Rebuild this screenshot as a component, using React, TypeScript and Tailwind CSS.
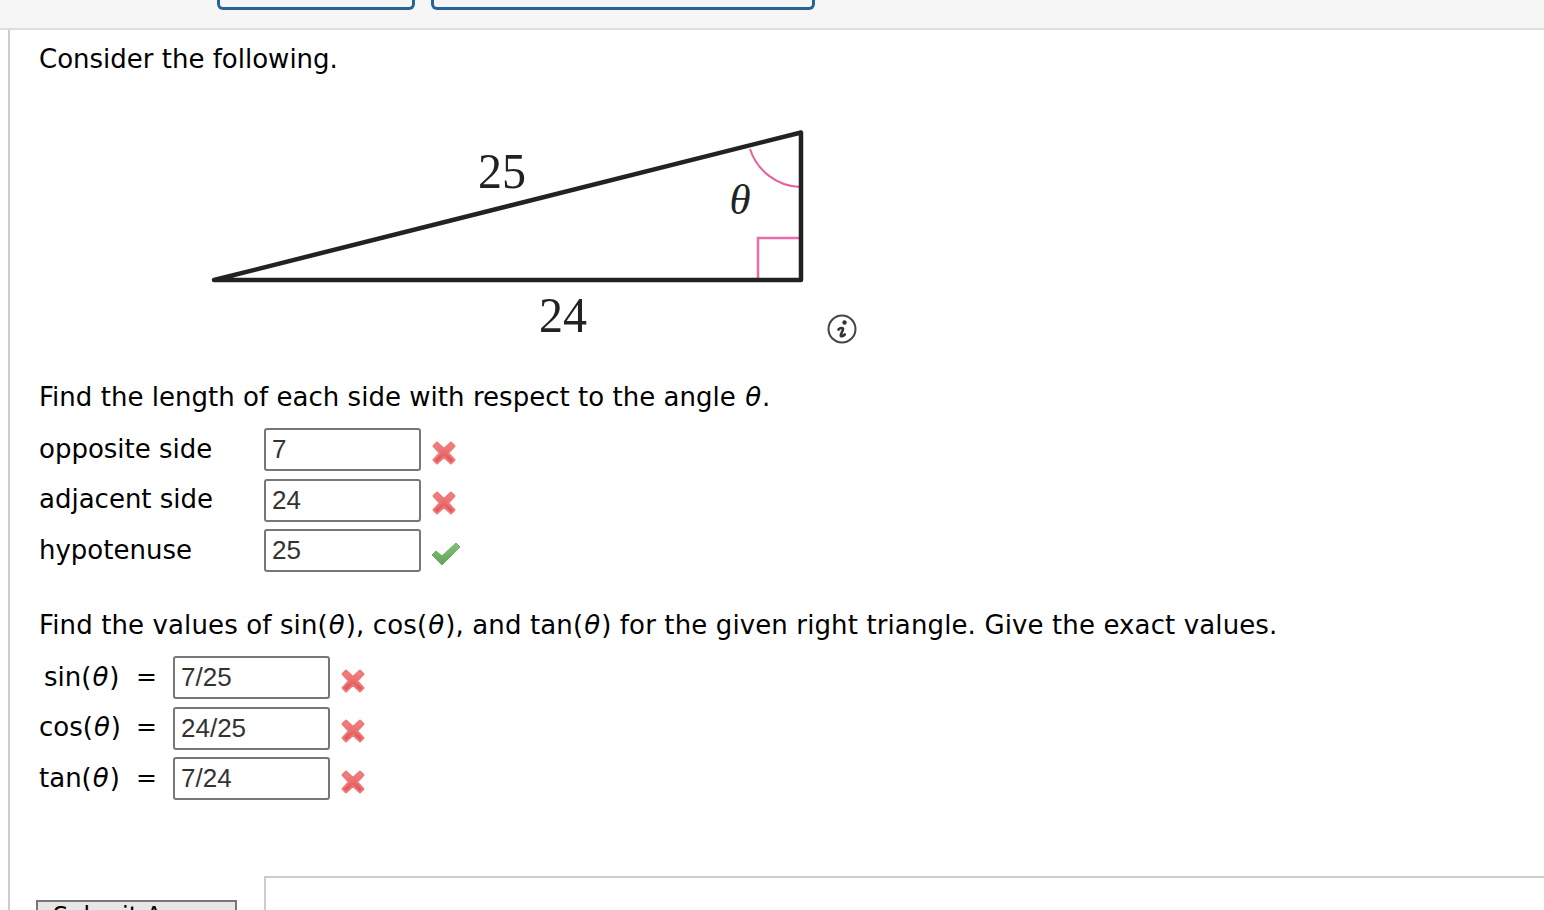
function Theta() {
  return <span className="mx-[1px] italic">θ</span>;
}

function Cross() {
  return (
    <svg width="28" height="28" viewBox="0 0 28 28" className="shrink-0">
      <defs>
        <linearGradient id="crossFill" x1="0" y1="0" x2="0" y2="1">
          <stop offset="0" stopColor="#f28a8a" />
          <stop offset="1" stopColor="#e04c4c" />
        </linearGradient>
      </defs>
      <path d="M3.5 7 7 3.5 14 10 21 3.5 24.5 7 18 14 24.5 21 21 24.5 14 18 7 24.5 3.5 21 10 14Z" fill="url(#crossFill)" stroke="#ee7878" strokeWidth="2" strokeLinejoin="round" />
    </svg>
  );
}

function Check() {
  return (
    <svg width="32" height="28" viewBox="0 0 32 28" className="shrink-0">
      <defs>
        <linearGradient id="checkFill" x1="0" y1="0" x2="0" y2="1">
          <stop offset="0" stopColor="#86c07c" />
          <stop offset="1" stopColor="#5fa556" />
        </linearGradient>
      </defs>
      <path d="M2 15 6 11 12 16 26 3 30 7 12 25Z" fill="url(#checkFill)" stroke="#6cae63" strokeLinejoin="round" />
    </svg>
  );
}

function Field({ value }: { value: string }) {
  return (
    <input
      readOnly
      value={value}
      className="h-[43px] w-[157px] rounded-[3px] border-2 border-[#777] bg-white px-[6px] font-['Liberation_Sans',sans-serif] text-[26px] text-[#333] outline-none"
    />
  );
}

function SideRow({ label, value, ok }: { label: string; value: string; ok?: boolean }) {
  return (
    <div className="flex h-[43px] items-center">
      <span className="w-[225px] pb-[2px]">{label}</span>
      <Field value={value} />
      <span className="ml-[9px] mt-[6px] flex">{ok ? <Check /> : <Cross />}</span>
    </div>
  );
}

function TrigRow({ fn, value, indent }: { fn: string; value: string; indent?: boolean }) {
  return (
    <div className="flex h-[43px] items-center">
      <span className={indent ? "w-[82px] pb-[2px] pl-[5px]" : "w-[82px] pb-[2px]"}>
        {fn}(<Theta />)
      </span>
      <span className="ml-[15px] w-[37px] pb-[2px] text-[25px]">=</span>
      <Field value={value} />
      <span className="ml-[9px] mt-[6px] flex"><Cross /></span>
    </div>
  );
}

export default function App() {
  return (
    <div className="h-[910px] overflow-hidden bg-white font-['DejaVu_Sans',sans-serif] text-[26px] leading-[32px] text-black">
      <div className="flex h-[30px] gap-[16px] border-b-2 border-[#ddd] bg-[#f6f6f6] pl-[217px]">
        <div className="h-[10px] w-[198px] rounded-b-[6px] border-x-[3px] border-b-[3px] border-[#266498]" />
        <div className="h-[10px] w-[384px] rounded-b-[6px] border-x-[3px] border-b-[3px] border-[#266498]" />
      </div>
      <div className="ml-[8px] h-[880px] border-l-2 border-[#ccc] pl-[29px] pt-[13px]">
        <p>Consider the following.</p>
        <div className="relative mt-[55px] h-[243px] w-[830px]">
          <svg width="660" height="243" viewBox="0 0 660 243" className="ml-[160px] block">
            <path d="M551 19A55 55 0 0 0 601 57" fill="none" stroke="#ea5c9b" strokeWidth="2" />
            <path d="M559 150V108H601" fill="none" stroke="#ea6ba6" strokeWidth="2.5" />
            <path d="M15 150 602 2.5V150Z" fill="none" stroke="#222" strokeWidth="4.5" strokeLinejoin="round" />
            <text x="303" y="58" textAnchor="middle" textLength="48" lengthAdjust="spacingAndGlyphs" fontFamily="'Liberation Serif',serif" fontSize="51" fill="#222">25</text>
            <text x="364" y="202" textAnchor="middle" textLength="48" lengthAdjust="spacingAndGlyphs" fontFamily="'Liberation Serif',serif" fontSize="51" fill="#222">24</text>
            <text x="541" y="84" textAnchor="middle" fontFamily="'Liberation Serif',serif" fontSize="43" fontStyle="italic" fill="#222">θ</text>
          </svg>
          <svg width="32" height="32" viewBox="0 0 32 32" className="absolute left-[787px] top-[183px]">
            <circle cx="16" cy="16" r="13.5" fill="none" stroke="#444" strokeWidth="2" />
            <circle cx="18.5" cy="9.5" r="2.2" fill="#333" />
            <path d="M12.5 16.5c1.5-1.5 5-2.5 4.5 0l-2.2 5.5c-.5 2 2 1.5 4-.5" fill="none" stroke="#333" strokeWidth="2.6" strokeLinecap="round" />
          </svg>
        </div>
        <p className="mt-[8px] tracking-[0.03px]">Find the length of each side with respect to the angle <Theta />.</p>
        <div className="mt-[15px] flex flex-col gap-[7.5px]">
          <SideRow label="opposite side" value="7" />
          <SideRow label="adjacent side" value="24" />
          <SideRow label="hypotenuse" value="25" ok />
        </div>
        <p className="mt-[37px] tracking-[0.12px]">Find the values of sin(<Theta />), cos(<Theta />), and tan(<Theta />) for the given right triangle. Give the exact values.</p>
        <div className="mt-[15px] flex flex-col gap-[7.5px]">
          <TrigRow fn="sin" value="7/25" indent />
          <TrigRow fn="cos" value="24/25" />
          <TrigRow fn="tan" value="7/24" />
        </div>
        <div className="-ml-[3px] mt-[76px] flex items-start">
          <button className="mt-[24px] w-[201px] shrink-0 overflow-hidden whitespace-nowrap border-2 border-[#777] bg-[#e6e6e6] pl-[15px] text-left font-['DejaVu_Sans',sans-serif] text-[24px] leading-[28px]">
            Submit Answer
          </button>
          <div className="ml-[27px] h-[120px] flex-1 border-l-2 border-t-2 border-[#ccc]" />
        </div>
      </div>
    </div>
  );
}
